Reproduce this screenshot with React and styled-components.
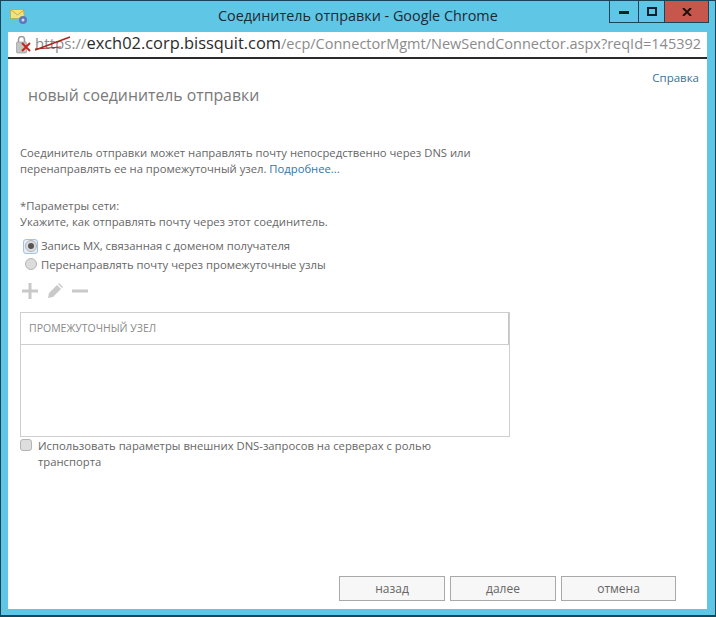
import React from "react";
import styled, { createGlobalStyle } from "styled-components";

const Global = createGlobalStyle`
  html, body { margin: 0; padding: 0; background: #5fc6e6; }
  body { font-family: "Open Sans", "Noto Sans", "Liberation Sans", sans-serif; }
`;

const Win = styled.div`
  width: 716px; height: 617px; box-sizing: border-box;
  background: #5fc6e6; border: 1px solid #17465a; border-bottom-width: 2px;
  display: flex; flex-direction: column; overflow: hidden;
`;
const TitleBar = styled.div`
  height: 30px; flex: none; display: flex; align-items: flex-start; padding: 0 6px 0 9px;
`;
const AppIcon = styled.svg`
  width: 18px; height: 16px; margin-top: 8px; flex: none;
`;
const Title = styled.div`
  flex: none; width: 279px; margin: 5px 0 0 190px; font-size: 14.4px; line-height: 20px;
  color: #1b2a33; white-space: nowrap;
`;
const Controls = styled.div`
  margin-left: auto; display: flex; height: 21px; border: 1px solid #17465a; border-top: 0;
`;
const Ctl = styled.div`
  width: ${p => p.$w}px; display: flex; align-items: center; justify-content: center;
  background: ${p => p.$bg || "transparent"};
  border-left: ${p => p.$sep ? "1px solid #17465a" : "0"};
  color: #10202a; box-sizing: border-box;
`;
const AddressBar = styled.div`
  height: 25px; margin: 1px 8px 0 7px; flex: none; background: #fff; border-bottom: 2px solid #2a2a2a;
  display: flex; align-items: center; padding-left: 8px; overflow: hidden;
`;
const Lock = styled.svg`width: 16px; height: 18px; flex: none;`;
const Url = styled.div`
  position: relative; font-size: 14.5px; line-height: 22px; color: #8b8b8b; white-space: nowrap; margin-left: 3px; margin-top: -2px;
`;
const Scheme = styled.span`font-size: 15.1px;`;
const Host = styled.span`color: #2b2b2b; font-size: 16.4px;`;
const Struck = styled.svg`
  position: absolute; left: 0; top: 0; width: 38px; height: 20px;
`;
const Content = styled.div`
  flex: 1; margin: 0 8px 6px 7px; background: #fff; display: flex; flex-direction: column;
  padding: 0 8px 0 12px; color: #666;
`;
const Help = styled.a`
  align-self: flex-end; margin-top: 11px; font-size: 11.5px; line-height: 16px; color: #3f6f92;
`;
const Heading = styled.h1`
  margin: -3px 0 0 8px; font-size: 15.8px; line-height: 24px; font-weight: 400; color: #7a7a7a;
`;
const Para = styled.p`
  margin: ${p => p.$mt}px 0 0; font-size: 11.25px; line-height: 16px; color: #666; width: 480px;
`;
const Link = styled.a`color: #2f76a8;`;
const Options = styled.div`
  margin-top: 7px; display: flex; flex-direction: column; gap: 1px; margin-left: 3px;
`;
const Opt = styled.label`
  display: flex; align-items: center; gap: 3px; font-size: 11.3px; line-height: 18px; color: #666;
`;
const RadioFrame = styled.span`
  width: 15px; height: 15px; flex: none; box-sizing: border-box; display: flex; align-items: center; justify-content: center;
  border: 1px solid ${p => p.$on ? "#a9c1e2" : "transparent"}; border-radius: 3px;
  background: ${p => p.$on ? "#e6eef9" : "transparent"};
  margin-bottom: ${p => p.$on ? 0 : 3}px;
`;
const Radio = styled.span`
  width: 12px; height: 12px; border-radius: 50%; flex: none; box-sizing: border-box;
  border: 1px solid #b5b5b5; background: #dcdcdc; display: flex; align-items: center; justify-content: center;
  &::after { content: ""; width: 6px; height: 6px; border-radius: 50%; background: ${p => p.$on ? "#555" : "transparent"}; }
`;
const Toolbar = styled.div`
  margin: 8px 0 0 2px; display: flex; align-items: center; gap: 9px; height: 18px;
`;
const Tool = styled.svg`width: 16px; height: 16px; flex: none; color: #c9c9c9;`;
const Table = styled.div`
  margin-top: 12px; width: 490px; height: 125px; box-sizing: border-box; border: 1px solid #cfcfcf;
`;
const THead = styled.div`
  height: 31px; border-bottom: 1px solid #cfcfcf; border-right: 1px solid #c4c4c4; padding-left: 8px;
  font-size: 10.5px; line-height: 31px; color: #8a8a8a; text-transform: uppercase;
`;
const CheckRow = styled.label`
  margin-top: 1px; width: 440px; display: flex; align-items: flex-start; gap: 6px;
  font-size: 11.27px; line-height: 16px; color: #666;
`;
const Box = styled.span`
  width: 12px; height: 12px; flex: none; margin-top: 1px; box-sizing: border-box;
  border: 1px solid #b5b5b5; border-radius: 3px; background: #dedede;
`;
const Footer = styled.div`
  margin-top: auto; margin-bottom: 8px; display: flex; gap: 5px; justify-content: flex-end; padding-right: 23px;
`;
const Btn = styled.button`
  width: ${p => p.$w}px; height: 25px; box-sizing: border-box; border: 1px solid #a9a9a9; background: #f7f7f7;
  font: 400 12px "Open Sans", "Noto Sans", sans-serif; color: #666; padding: 0;
`;

export default function App() {
  return (
    <>
      <Global />
      <Win>
        <TitleBar>
          <AppIcon viewBox="0 0 18 16">
            <path d="M0.500 0.500h13l1 9H0.500z" fill="#f3e27a" stroke="#b9a23f" strokeWidth=".7" />
            <path d="M1 1l6.500 5 6.500-5" fill="none" stroke="#b9a23f" strokeWidth=".8" />
            <circle cx="13" cy="11" r="4" fill="#5c78b8" />
            <circle cx="13" cy="11" r="1.500" fill="#cfd9ef" />
          </AppIcon>
          <Title>Соединитель отправки - Google Chrome</Title>
          <Controls>
            <Ctl $w={28}>
              <svg width="10" height="4"><rect width="10" height="3" y="1" fill="#10202a" /></svg>
            </Ctl>
            <Ctl $w={26} $sep>
              <svg width="10" height="9"><rect x="1" y="1" width="8" height="7" fill="none" stroke="#10202a" strokeWidth="2" /></svg>
            </Ctl>
            <Ctl $w={44} $sep $bg="#c7574c">
              <svg width="10" height="8" viewBox="0 0 10 8"><path d="M1 0l8 8M9 0L1 8" stroke="#20110f" strokeWidth="2" /></svg>
            </Ctl>
          </Controls>
        </TitleBar>
        <AddressBar>
          <Lock viewBox="0 0 16 18">
            <rect x="0.500" y="6" width="10" height="11" rx="1" fill="#c4c4c4" stroke="#8f8f8f" strokeWidth=".6" />
            <path d="M2.500 6V3.500a3 3 0 0 1 6 0V6" fill="none" stroke="#9a9a9a" strokeWidth="1.500" />
            <path d="M6 7l8 8M14 7l-8 8" stroke="#c4281e" strokeWidth="2" />
          </Lock>
          <Url>
            <Scheme>https://</Scheme><Host>exch02.corp.bissquit.com</Host>/ecp/ConnectorMgmt/NewSendConnector.aspx?reqId=145392
            <Struck viewBox="0 0 38 20">
              <path d="M0 18L35 5" stroke="#a5261c" strokeWidth="1.400" fill="none" />
              <path d="M0 17L26 15" stroke="#a5261c" strokeWidth="1" fill="none" />
            </Struck>
          </Url>
        </AddressBar>
        <Content>
          <Help>Справка</Help>
          <Heading>новый соединитель отправки</Heading>
          <Para $mt={38}>
            Соединитель отправки может направлять почту непосредственно через DNS или
            перенаправлять ее на промежуточный узел. <Link>Подробнее...</Link>
          </Para>
          <Para $mt={21}>
            *Параметры сети:<br />Укажите, как отправлять почту через этот соединитель.
          </Para>
          <Options>
            <Opt><RadioFrame $on><Radio $on /></RadioFrame>Запись MX, связанная с доменом получателя</Opt>
            <Opt><RadioFrame><Radio /></RadioFrame>Перенаправлять почту через промежуточные узлы</Opt>
          </Options>
          <Toolbar>
            <Tool viewBox="0 0 16 16"><path d="M0 8h16M8 0v16" stroke="currentColor" strokeWidth="3" /></Tool>
            <Tool viewBox="0 0 16 16"><path d="M1 15l1-5 8-8 4 4-8 8zM11 1l1-1 4 4-1 1z" fill="currentColor" /></Tool>
            <Tool viewBox="0 0 16 16"><path d="M0 8h16" stroke="currentColor" strokeWidth="3" /></Tool>
          </Toolbar>
          <Table><THead>Промежуточный узел</THead></Table>
          <CheckRow>
            <Box />
            <span>Использовать параметры внешних DNS-запросов на серверах с ролью транспорта</span>
          </CheckRow>
          <Footer>
            <Btn $w={106}>назад</Btn>
            <Btn $w={106}>далее</Btn>
            <Btn $w={115}>отмена</Btn>
          </Footer>
        </Content>
      </Win>
    </>
  );
}
